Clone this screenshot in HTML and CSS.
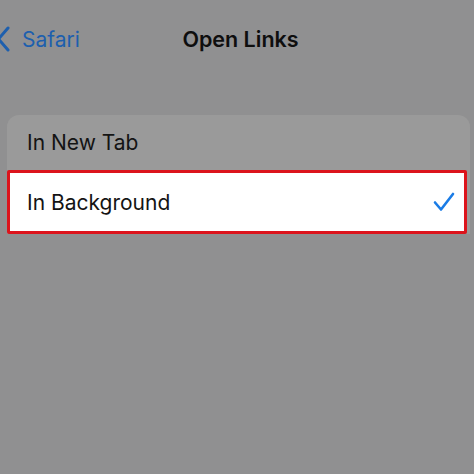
FILE: index.html
```html
<!DOCTYPE html>
<html lang="en">
<head>
    <meta charset="UTF-8">
    <title>Open Links</title>
    <link rel="stylesheet" href="styles.css">
</head>
<body>
    <div class="nav">
        <div class="back">
            <svg class="chevron" width="13" height="26" viewBox="0 0 13 26">
                <path d="M11 2 L1.5 13 L11 24" fill="none" stroke="#1d5fae" stroke-width="3" stroke-linecap="round" stroke-linejoin="round"/>
            </svg>
            <span>Safari</span>
        </div>
        <h1 class="title">Open Links</h1>
    </div>

    <div class="list">
        <div class="row">In New Tab</div>
        <div class="row selected">
            <span>In Background</span>
            <svg class="check" width="22" height="20" viewBox="0 0 22 20">
                <path d="M2 10.5 L8 17.5 L20 2" fill="none" stroke="#1a7ce6" stroke-width="2.6" stroke-linecap="round" stroke-linejoin="round"/>
            </svg>
        </div>
    </div>
</body>
</html>
```

FILE: styles.css
```css
body {
    margin: 0;
    height: 474px;
    background: #909091;
    font-family: 'Inter', 'Roboto', sans-serif;
    color: #111;
    overflow: hidden;
}

.nav {
    position: relative;
    height: 78px;
    display: flex;
    align-items: center;
    justify-content: center;
}

.back {
    position: absolute;
    left: -3px;
    top: 26px;
    display: flex;
    align-items: center;
    gap: 12px;
    color: #1d5fae;
    font-size: 21px;
}

.title {
    margin: 0 0 0 7px;
    font-size: 21.5px;
    font-weight: 600;
    color: #0e0e0e;
}

.list {
    margin: 37px 4px 0 7px;
    background: #9a9a9a;
    border-radius: 12px 12px 0 0;
}

.row {
    height: 55px;
    display: flex;
    align-items: center;
    justify-content: space-between;
    padding: 0 18px 0 20px;
    font-size: 21px;
    color: #141414;
}

.selected {
    height: 58px;
    margin-right: 3px;
    background: #fff;
    border: 3px solid #dc141c;
    border-radius: 2px;
    padding: 0 9px 0 17px;
}

.check {
    display: block;
}
```
